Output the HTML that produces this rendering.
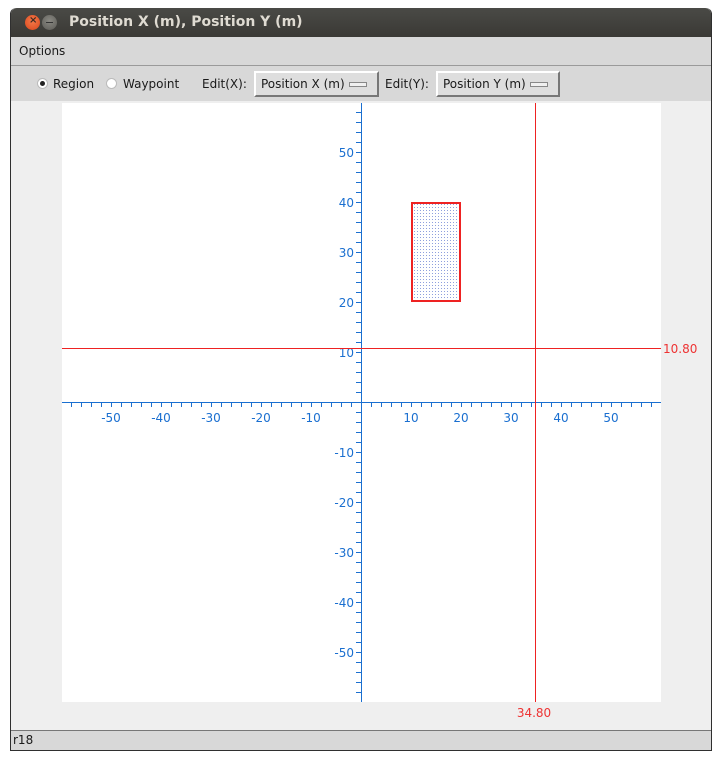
<!DOCTYPE html>
<html><head><meta charset="utf-8"><style>
body{margin:0;width:720px;height:758px;background:#fff;position:relative;overflow:hidden;font-family:"DejaVu Sans","Liberation Sans",sans-serif;font-size:12px;color:#1a1a1a}
.win{position:absolute;left:10px;top:8px;width:700px;height:742px;border:1px solid #2f2f2f;border-top:none;background:#efefef;border-radius:6px 6px 0 0}
.title{position:absolute;left:0;top:0;width:700px;height:29px;background:linear-gradient(#4a4a46,#3a3935);border-radius:6px 6px 0 0;color:#dfdbd2;font-weight:bold;font-size:14px}
.title span{position:absolute;left:58px;top:6px}
.b{position:absolute;top:7px;width:15px;height:15px;border-radius:50%}
.menu{position:absolute;left:0;top:29px;width:700px;height:28px;background:#d8d8d8;border-bottom:1px solid #9a9a9a}
.tool{position:absolute;left:0;top:58px;width:700px;height:35px;background:#d8d8d8}
.combo{position:absolute;top:5px;height:26px;background:#dedede;border:2px solid;border-color:#fff #777 #777 #fff;box-sizing:border-box}
.combo span{position:absolute;left:5px;top:4px}
.combo i{position:absolute;right:10px;top:9px;width:16px;height:3px;background:#f0f0f0;border:1px solid #888}
.radio{position:absolute;top:12px;width:9px;height:9px;border-radius:50%;background:#fff;border:1px solid #bbb}
.status{position:absolute;left:0;top:722px;width:700px;height:19px;background:#d8d8d8;border-top:1px solid #777}
</style></head><body>
<div class="win">
<div class="title"><div class="b" style="left:14px;background:radial-gradient(circle at 50% 40%,#f57a4a,#d9461b)"><span style="position:absolute;left:4px;top:0px;color:#3b2a22;font-size:10px;font-weight:bold">×</span></div><div class="b" style="left:31px;background:radial-gradient(circle at 50% 40%,#8a8983,#5b5a55)"><div style="position:absolute;left:4px;top:7px;width:7px;height:1px;background:#333"></div></div><span>Position X (m), Position Y (m)</span></div>
<div class="menu"><span style="position:absolute;left:8px;top:7px">Options</span></div>
<div class="tool">
<div class="radio" style="left:26px"><div style="position:absolute;left:2px;top:2px;width:5px;height:5px;border-radius:50%;background:#222"></div></div>
<span style="position:absolute;left:42px;top:11px">Region</span>
<div class="radio" style="left:95px"></div>
<span style="position:absolute;left:112px;top:11px">Waypoint</span>
<span style="position:absolute;left:191px;top:11px">Edit(X):</span>
<div class="combo" style="left:243px;width:125px"><span>Position X (m)</span><i></i></div>
<span style="position:absolute;left:374px;top:11px">Edit(Y):</span>
<div class="combo" style="left:425px;width:124px"><span>Position Y (m)</span><i></i></div>
</div>
<div class="status"><span style="position:absolute;left:2px;top:2px">r18</span></div>
</div>
<svg style="position:absolute;left:0;top:0" width="720" height="758" font-family="DejaVu Sans,Liberation Sans,sans-serif" font-size="12" shape-rendering="crispEdges">
<defs>
<pattern id="yt" patternUnits="userSpaceOnUse" width="10" height="10"><rect x="0" y="2" width="10" height="1" fill="#1a6fd0"/></pattern>
<pattern id="xt" patternUnits="userSpaceOnUse" width="10" height="10"><rect x="1" y="0" width="1" height="10" fill="#1a6fd0"/></pattern>
<pattern id="dots" patternUnits="userSpaceOnUse" width="3" height="3"><rect x="0" y="0" width="1" height="1" fill="#8fa0dd"/></pattern>
</defs>
<rect x="62" y="103" width="599" height="599" fill="#fff"/>
<rect x="356" y="103" width="5" height="599" fill="url(#yt)"/>
<rect x="361" y="402" width="300" height="5" fill="url(#xt)"/>
<rect x="62" y="402" width="299" height="5" fill="url(#xt)"/>
<rect x="361" y="103" width="1" height="599" fill="#1a6fd0"/>
<rect x="62" y="402" width="599" height="1" fill="#1a6fd0"/>
<g fill="#1a6fd0" text-anchor="end" shape-rendering="auto">
<text x="354" y="157">50</text><text x="354" y="207">40</text><text x="354" y="257">30</text><text x="354" y="307">20</text><text x="354" y="357">10</text>
<text x="354" y="457">-10</text><text x="354" y="507">-20</text><text x="354" y="557">-30</text><text x="354" y="607">-40</text><text x="354" y="657">-50</text>
</g>
<g fill="#1a6fd0" text-anchor="middle" shape-rendering="auto">
<text x="111" y="422">-50</text><text x="161" y="422">-40</text><text x="211" y="422">-30</text><text x="261" y="422">-20</text><text x="311" y="422">-10</text>
<text x="411" y="422">10</text><text x="461" y="422">20</text><text x="511" y="422">30</text><text x="561" y="422">40</text><text x="611" y="422">50</text>
</g>
<rect x="412" y="203" width="48" height="98" fill="url(#dots)" stroke="#ee2222" stroke-width="2"/>
<rect x="62" y="348" width="599" height="1" fill="#ee2222"/>
<rect x="535" y="103" width="1" height="599" fill="#ee2222"/>
<text x="663" y="353" fill="#ee3333" shape-rendering="auto">10.80</text>
<text x="534" y="717" fill="#ee3333" text-anchor="middle" shape-rendering="auto">34.80</text>
</svg>
</body></html>
